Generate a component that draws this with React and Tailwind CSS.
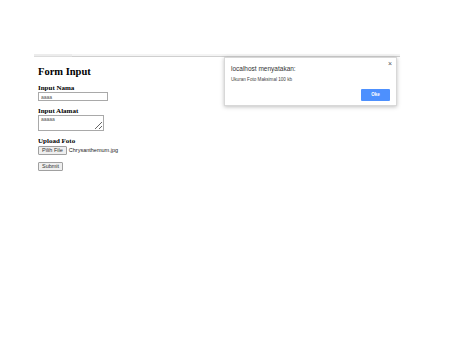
export default function App() {
  return (
    <div className="relative w-[474px] h-[349px] bg-white overflow-hidden">
      <div className="pt-[54px] pl-[34px] w-[400px]">
        {/* tab strip */}
        <div className="flex h-[3px]">
          <div className="w-[38px] bg-[#ececec] border-b border-[#dcdcdc]" />
          <div className="flex-1 bg-[#f4f4f4] border-b border-[#cfcfcf]" />
        </div>

        <form className="pl-[4px] flex flex-col items-start font-['Liberation_Serif',serif] text-black leading-none">
          <h2 className="mt-[9px] h-[12px] text-[10.5px] font-bold leading-[12px]">Form Input</h2>

          <label className="mt-[7px] h-[7px] text-[7px] font-bold leading-[7px]">Input Nama</label>
          <input
            defaultValue="aaaa"
            className="block w-[70px] h-[9px] border border-[#a9a9a9] px-[2px] text-[5px] leading-[7px] text-[#555] font-['Liberation_Sans',sans-serif] outline-none"
          />

          <label className="mt-[7px] h-[7px] text-[7px] font-bold leading-[7px]">Input Alamat</label>
          <textarea
            defaultValue="aaaaa"
            className="block w-[66px] h-[16px] border border-[#a9a9a9] px-[2px] py-0 text-[5px] leading-[7px] text-[#555] font-['Liberation_Sans',sans-serif] outline-none resize-y"
          />

          <label className="mt-[7px] h-[7px] text-[7px] font-bold leading-[7px]">Upload Foto</label>
          <div className="mt-[1px] h-[9px] flex items-center gap-[2px] font-['Liberation_Sans',sans-serif]">
            <span className="h-[9px] px-[3px] flex items-center border border-[#a0a0a0] rounded-[1px] bg-[#efefef] text-[5.5px] text-[#333]">
              Pilih File
            </span>
            <span className="text-[5.5px] text-[#222]">Chrysanthemum.jpg</span>
          </div>

          <span className="mt-[7px] h-[9px] px-[3px] flex items-center border border-[#a0a0a0] rounded-[1px] bg-[#efefef] text-[5.5px] text-[#333] font-['Liberation_Sans',sans-serif]">
            Submit
          </span>
        </form>
      </div>

      {/* alert dialog */}
      <div className="absolute left-[224px] top-[57px] w-[173px] h-[49px] bg-white border border-[#d8d8d8] shadow-[0_1px_4px_rgba(0,0,0,0.25)] font-['Liberation_Sans',sans-serif]">
        <div className="flex justify-between pl-[6px] pr-[4px] pt-[3px]">
          <div className="pt-[4px]">
            <div className="text-[6.5px] leading-[8px] text-[#333]">localhost menyatakan:</div>
            <div className="mt-[4px] text-[4.6px] leading-[6px] text-[#444]">Ukuran Foto Maksimal 100 kb</div>
          </div>
          <span className="text-[7px] leading-[6px] text-[#555]">×</span>
        </div>
        <div className="flex justify-end pr-[6px] mt-[6px]">
          <span className="w-[29px] h-[12px] flex items-center justify-center bg-[#4d90fe] rounded-[1px] text-[4.5px] font-bold text-white">
            Oke
          </span>
        </div>
      </div>
    </div>
  );
}
